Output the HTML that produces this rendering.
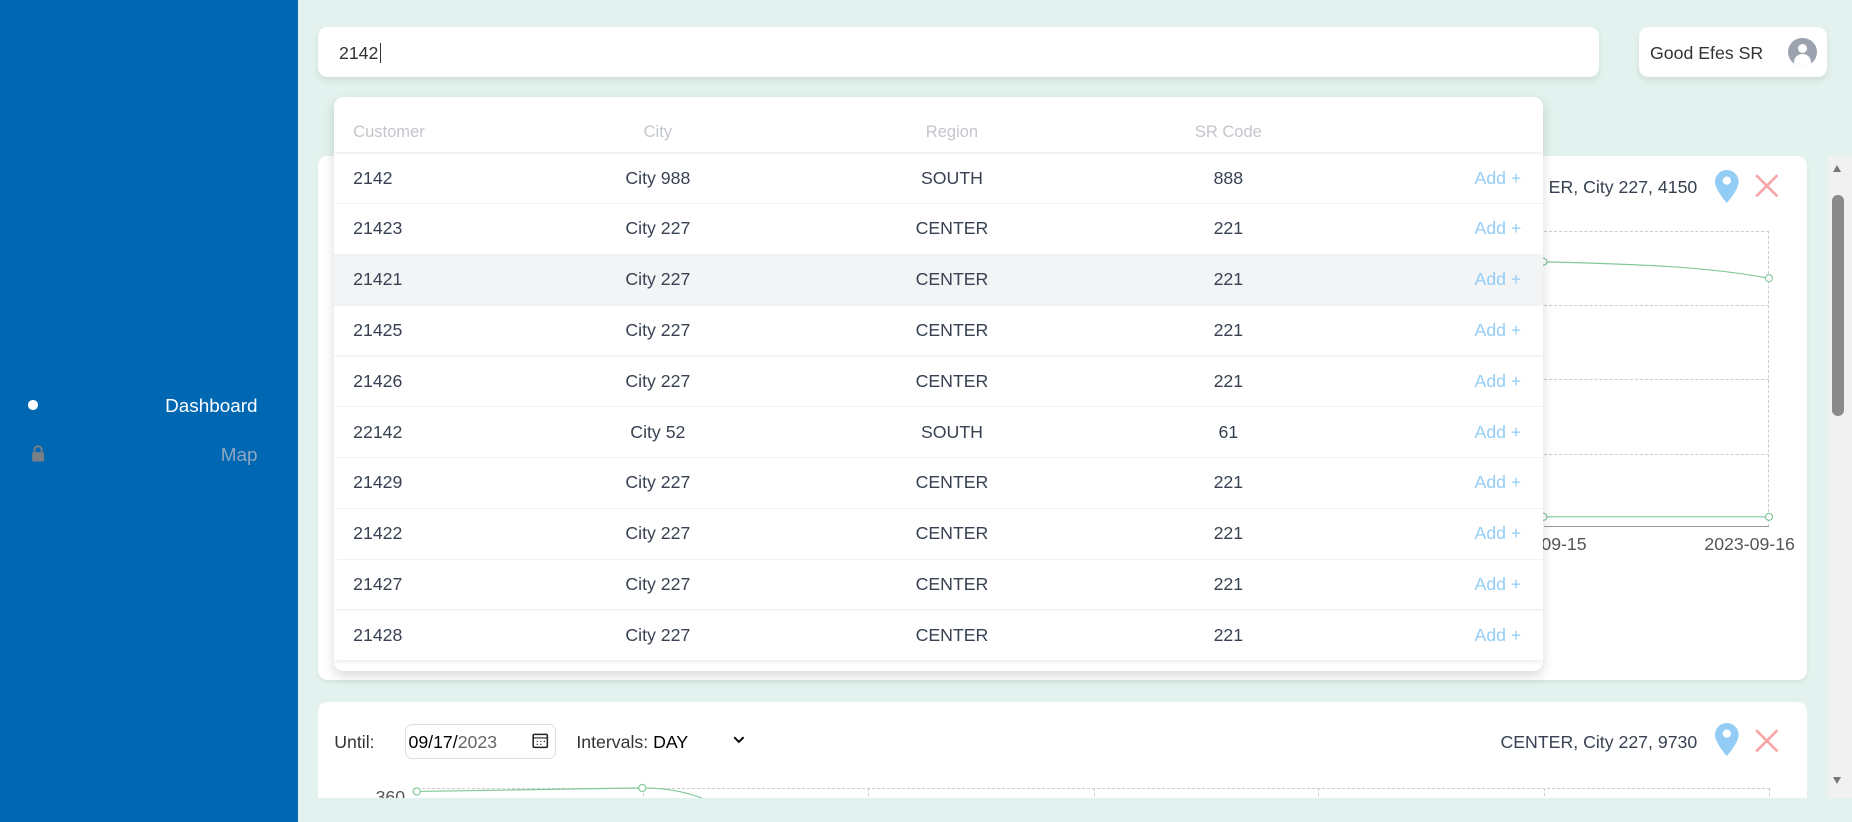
<!DOCTYPE html>
<html><head><meta charset="utf-8"><style>
html{zoom:1.18112}
body{margin:0;width:1568px;height:696px;overflow:hidden;background:#e3f2ee;font-family:"Liberation Sans",sans-serif;font-size:15px;color:#374151;position:relative}
.a{position:absolute}
.side{left:0;top:0;width:252px;height:696px;background:#0067b3}
.card{background:#fff;border-radius:8px}
.row{position:absolute;left:0;width:1023px;height:42px;background:#fff;box-shadow:0 2px 3px rgba(0,0,0,.06)}
.row span{position:absolute;top:12px}
.c1{left:16px}.c2{left:238px;width:72px;text-align:center}.c3{left:488px;width:70px;text-align:center}.c4{left:722px;width:70px;text-align:center}.c5{right:18px;color:#93cdf5}
.grid{border-top:1px dashed #ccc}
.vg{position:absolute;top:73px;height:20px;border-left:1px dashed #ccc}
</style></head><body>
<div class="a side">
 <div class="a" style="left:24px;top:339px;width:8px;height:8px;border-radius:50%;background:#fff"></div>
 <div class="a" style="right:34px;top:335px;color:#fff;font-size:16px">Dashboard</div>
 <svg class="a" style="left:26px;top:377px" width="12" height="14" viewBox="0 0 12 14"><path d="M3 6V4a3 3 0 0 1 6 0v2" stroke="#7a7f86" stroke-width="1.6" fill="none"/><rect x="1" y="6" width="10" height="8" rx="1" fill="#7a7f86"/></svg>
 <div class="a" style="right:34px;top:377px;color:#8ea6c0;font-size:16px">Map</div>
</div>

<div class="a card" style="left:269px;top:23px;width:1085px;height:42px;box-shadow:0 3px 6px rgba(0,0,0,.08)">
 <div class="a" style="left:18px;top:13px;color:#333">2142<span style="border-left:1px solid #333;margin-left:1px"></span></div>
</div>
<div class="a card" style="left:1388px;top:23px;width:159px;height:42px;box-shadow:0 3px 6px rgba(0,0,0,.08)">
 <div class="a" style="left:9px;top:13px;color:#333">Good Efes SR</div>
 <div class="a" style="left:126px;top:9px;width:24px;height:24px;border-radius:50%;background:#9ca3af;overflow:hidden">
  <div class="a" style="left:8px;top:5px;width:8px;height:8px;border-radius:50%;background:#fff"></div>
  <div class="a" style="left:5px;top:14px;width:14px;height:12px;border-radius:7px 7px 0 0;background:#fff"></div></div>
</div>

<div class="a card" style="left:269px;top:132px;width:1261px;height:444px;box-shadow:0 2px 4px rgba(0,0,0,.06)">
 <div class="a" style="right:93px;top:18px">ER, City 227, 4150</div>
 <svg class="a" style="left:1183px;top:12px" width="20" height="28" viewBox="0 0 20 28"><path d="M10 0a10 10 0 0 1 10 10c0 7-10 18-10 18S0 17 0 10A10 10 0 0 1 10 0z" fill="#93cdf5"/><circle cx="10" cy="9" r="3.5" fill="#fff"/></svg>
 <svg class="a" style="left:1217px;top:15px" width="20" height="20"><path d="M1 1L19 19M19 1L1 19" stroke="#f8a5a5" stroke-width="2.2"/></svg>
 <div class="a grid" style="left:1038px;top:64px;width:191px"></div>
 <div class="a grid" style="left:1038px;top:126px;width:191px"></div>
 <div class="a grid" style="left:1038px;top:189px;width:191px"></div>
 <div class="a grid" style="left:1038px;top:252px;width:191px"></div>
 <div class="a" style="left:1228px;top:64px;height:250px;border-left:1px dashed #ccc"></div>
 <div class="a" style="left:1038px;top:313px;width:191px;border-top:1px solid #999"></div>
 <svg class="a" style="left:1036px;top:86px" width="196" height="226"><path d="M2 4 C80 6 140 8 193 18" stroke="#82c99a" fill="none"/><circle cx="193" cy="18" r="3" fill="#fff" stroke="#82c99a"/><circle cx="2" cy="4" r="3" fill="#fff" stroke="#82c99a"/><path d="M2 220H193" stroke="#82c99a"/><circle cx="193" cy="220" r="3" fill="#fff" stroke="#82c99a"/><circle cx="2" cy="220" r="3" fill="#fff" stroke="#82c99a"/></svg>
 <div class="a" style="left:1036px;top:320px;color:#555">09-15</div>
 <div class="a" style="left:1174px;top:320px;color:#555">2023-09-16</div>
</div>

<div class="a" style="left:1548px;top:132px;width:20px;height:544px;background:#f1f1f1">
 <div class="a" style="left:3px;top:33px;width:10px;height:187px;border-radius:5px;background:#8a8a8a"></div>
 <div class="a" style="left:4px;top:8px;border:4px solid transparent;border-bottom:6px solid #777;border-top:0"></div>
 <div class="a" style="left:4px;top:526px;border:4px solid transparent;border-top:6px solid #777;border-bottom:0"></div>
</div>

<div class="a card" style="left:269px;top:594px;width:1261px;height:90px">
 <div class="a" style="left:14px;top:26px;color:#333">Until:</div>
 <div class="a" style="left:74px;top:19px;width:126px;height:28px;border:1px solid #ddd;border-radius:6px">
  <div class="a" style="left:2px;top:6px;color:#000">09/17/<span style="color:#666">2023</span></div>
  <svg class="a" style="left:107px;top:6px" width="14" height="14"><rect x="1" y="2" width="12" height="11" rx="1" fill="none" stroke="#222" stroke-width="1.3"/><path d="M1 5H13M4 8h1M7 8h1M10 8h1M4 10.5h1M7 10.5h1" stroke="#222"/></svg>
 </div>
 <div class="a" style="left:219px;top:26px;color:#333">Intervals: <span style="color:#000">DAY</span></div>
 <svg class="a" style="left:352px;top:29px" width="10" height="8"><path d="M1 1l4 4 4-4" stroke="#000" stroke-width="1.6" fill="none"/></svg>
 <div class="a" style="right:93px;top:26px">CENTER, City 227, 9730</div>
 <svg class="a" style="left:1183px;top:18px" width="20" height="28" viewBox="0 0 20 28"><path d="M10 0a10 10 0 0 1 10 10c0 7-10 18-10 18S0 17 0 10A10 10 0 0 1 10 0z" fill="#93cdf5"/><circle cx="10" cy="9" r="3.5" fill="#fff"/></svg>
 <svg class="a" style="left:1217px;top:23px" width="20" height="20"><path d="M1 1L19 19M19 1L1 19" stroke="#f8a5a5" stroke-width="2.2"/></svg>
 <div class="a grid" style="left:84px;top:73px;width:1146px"></div>
 <div class="vg" style="left:275px"></div><div class="vg" style="left:466px"></div><div class="vg" style="left:657px"></div><div class="vg" style="left:847px"></div><div class="vg" style="left:1038px"></div><div class="vg" style="left:1229px"></div>
 <svg class="a" style="left:80px;top:68px" width="300" height="20"><path d="M4 8L195 5 C220 5 240 10 260 20" stroke="#82c99a" fill="none"/><circle cx="4" cy="8" r="3" fill="#fff" stroke="#82c99a"/><circle cx="195" cy="5" r="3" fill="#fff" stroke="#82c99a"/></svg>
 <div class="a" style="left:49px;top:72px;color:#555">360</div>
</div>
<div class="a" style="left:252px;top:676px;width:1296px;height:20px;background:#e3f2ee"></div>

<div class="a" style="left:283px;top:82px;width:1023px;height:486px;background:#fff;border-radius:8px;box-shadow:0 4px 10px rgba(0,0,0,.15);overflow:hidden">
 <div class="row" style="top:10px;height:37px;color:#c3c6cc;font-size:14px"><span class="c1" style="top:11px">Customer</span><span class="c2" style="top:11px">City</span><span class="c3" style="top:11px">Region</span><span class="c4" style="top:11px">SR Code</span></div>
 <div class="row" style="top:48px"><span class="c1">2142</span><span class="c2">City 988</span><span class="c3">SOUTH</span><span class="c4">888</span><span class="c5">Add +</span></div>
 <div class="row" style="top:91px"><span class="c1">21423</span><span class="c2">City 227</span><span class="c3">CENTER</span><span class="c4">221</span><span class="c5">Add +</span></div>
 <div class="row" style="top:134px;background:#f3f4f6"><span class="c1">21421</span><span class="c2">City 227</span><span class="c3">CENTER</span><span class="c4">221</span><span class="c5">Add +</span></div>
 <div class="row" style="top:177px"><span class="c1">21425</span><span class="c2">City 227</span><span class="c3">CENTER</span><span class="c4">221</span><span class="c5">Add +</span></div>
 <div class="row" style="top:220px"><span class="c1">21426</span><span class="c2">City 227</span><span class="c3">CENTER</span><span class="c4">221</span><span class="c5">Add +</span></div>
 <div class="row" style="top:263px"><span class="c1">22142</span><span class="c2">City 52</span><span class="c3">SOUTH</span><span class="c4">61</span><span class="c5">Add +</span></div>
 <div class="row" style="top:306px"><span class="c1">21429</span><span class="c2">City 227</span><span class="c3">CENTER</span><span class="c4">221</span><span class="c5">Add +</span></div>
 <div class="row" style="top:349px"><span class="c1">21422</span><span class="c2">City 227</span><span class="c3">CENTER</span><span class="c4">221</span><span class="c5">Add +</span></div>
 <div class="row" style="top:392px"><span class="c1">21427</span><span class="c2">City 227</span><span class="c3">CENTER</span><span class="c4">221</span><span class="c5">Add +</span></div>
 <div class="row" style="top:435px"><span class="c1">21428</span><span class="c2">City 227</span><span class="c3">CENTER</span><span class="c4">221</span><span class="c5">Add +</span></div>
</div>
</body></html>
